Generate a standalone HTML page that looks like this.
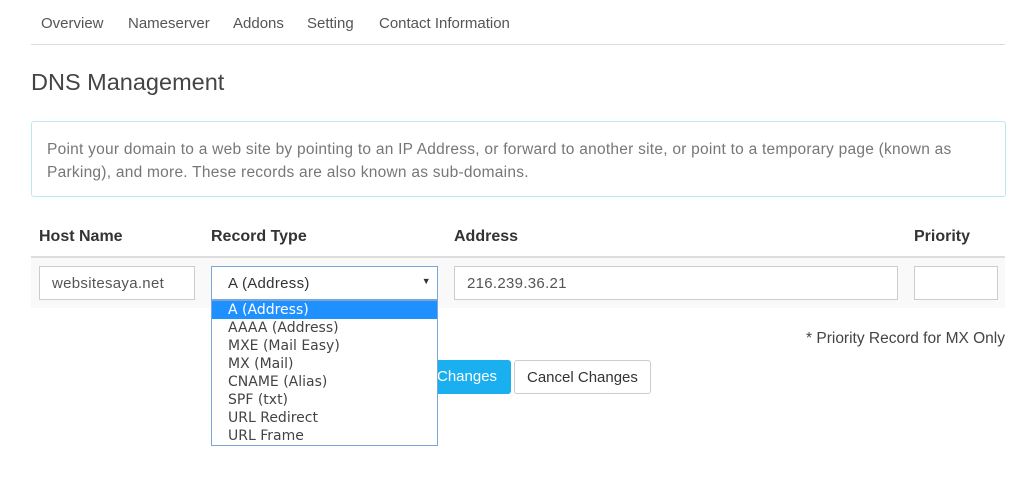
<!DOCTYPE html>
<html><head><style>
*{box-sizing:border-box;margin:0;padding:0}
body{width:1029px;height:479px;background:#fff;font-family:"Liberation Sans","DejaVu Sans",sans-serif;color:#555;position:relative;overflow:hidden}
.a{position:absolute}
.nav span{position:absolute;top:15px;font-size:15px;color:#555}
.inp{position:absolute;border:1px solid #ccc;background:#fff;height:34px;font-size:15px;padding:8px 0 0 12px;color:#555;letter-spacing:0.3px}
.dd div{height:18px;font-family:"DejaVu Sans",sans-serif;font-size:14px;padding-left:16px;line-height:18px;color:#444}
</style></head><body>
<div class="nav">
<span style="left:41px">Overview</span>
<span style="left:128px">Nameserver</span>
<span style="left:233px">Addons</span>
<span style="left:307px">Setting</span>
<span style="left:379px">Contact Information</span>
</div>
<div class="a" style="left:31px;top:44px;width:974px;height:1px;background:#ddd"></div>
<div class="a" style="left:31px;top:69px;font-size:23.5px;color:#444">DNS Management</div>
<div class="a" style="left:31px;top:121px;width:975px;height:76px;border:1px solid #bce8f1;border-radius:3px;padding:16px 15px;font-size:15.5px;line-height:23px;color:#777;letter-spacing:0.25px">Point your domain to a web site by pointing to an IP Address, or forward to another site, or point to a temporary page (known as Parking), and more. These records are also known as sub-domains.</div>
<div class="a" style="left:39px;top:228px;font-size:16px;font-weight:bold;color:#333">Host Name</div>
<div class="a" style="left:211px;top:228px;font-size:16px;font-weight:bold;color:#333">Record Type</div>
<div class="a" style="left:454px;top:228px;font-size:16px;font-weight:bold;color:#333">Address</div>
<div class="a" style="left:914px;top:228px;font-size:16px;font-weight:bold;color:#333">Priority</div>
<div class="a" style="left:31px;top:256px;width:974px;height:2px;background:#ddd"></div>
<div class="a" style="left:31px;top:258px;width:974px;height:50px;background:#f9f9f9"></div>
<div class="inp" style="left:39px;top:266px;width:156px">websitesaya.net</div>
<div class="inp" style="left:211px;top:266px;width:227px;border-color:#7aa7d8;padding-left:16px;color:#333">A (Address)<span style="position:absolute;right:6px;top:9px;font-size:9px">▼</span></div>
<div class="inp" style="left:454px;top:266px;width:444px">216.239.36.21</div>
<div class="inp" style="left:914px;top:266px;width:84px"></div>
<div class="a" style="right:24px;top:330px;font-size:15.5px;color:#444">* Priority Record for MX Only</div>
<div class="a" style="left:420px;top:360px;width:91px;height:34px;background:#1ab0f0;border-radius:3px;color:#fff;font-size:15px;padding:8px 0 0 17px">Changes</div>
<div class="a" style="left:514px;top:360px;width:137px;height:34px;border:1px solid #ccc;border-radius:3px;color:#333;font-size:15px;padding:8px 0 0 12px">Cancel Changes</div>
<div class="a dd" style="left:211px;top:300px;width:227px;height:146px;border:1px solid #7aa7d8;background:#fff">
<div style="background:#1e90ff;color:#fff">A (Address)</div>
<div>AAAA (Address)</div>
<div>MXE (Mail Easy)</div>
<div>MX (Mail)</div>
<div>CNAME (Alias)</div>
<div>SPF (txt)</div>
<div>URL Redirect</div>
<div>URL Frame</div>
</div>
</body></html>
